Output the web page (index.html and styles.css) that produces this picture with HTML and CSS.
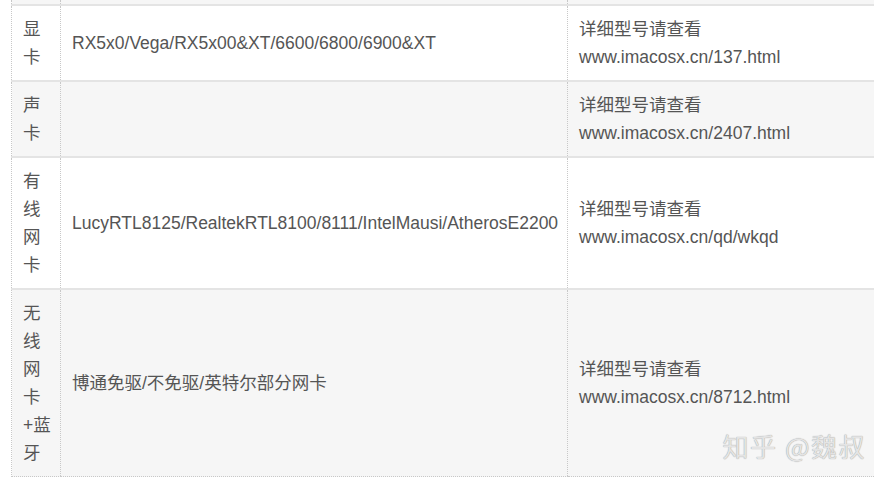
FILE: index.html
```html
<!DOCTYPE html>
<html lang="zh-CN">
<head>
    <meta charset="UTF-8">
    <meta name="viewport" content="width=device-width, initial-scale=1.0">
    <title>硬件支持</title>
    <link rel="stylesheet" href="styles.css">
</head>
<body>
    <div class="page">
        <table class="spec">
            <colgroup>
                <col class="col-name">
                <col class="col-model">
                <col class="col-link">
            </colgroup>
            <tr class="cut"><td></td><td></td><td></td></tr>
            <tr>
                <td class="name">显卡</td>
                <td class="model">RX5x0/Vega/RX5x00&amp;XT/6600/6800/6900&amp;XT</td>
                <td>详细型号请查看<br>www.imacosx.cn/137.html</td>
            </tr>
            <tr class="alt">
                <td class="name">声卡</td>
                <td class="model"></td>
                <td>详细型号请查看<br>www.imacosx.cn/2407.html</td>
            </tr>
            <tr>
                <td class="name">有线网卡</td>
                <td class="model">LucyRTL8125/RealtekRTL8100/8111/IntelMausi/AtherosE2200</td>
                <td>详细型号请查看<br>www.imacosx.cn/qd/wkqd</td>
            </tr>
            <tr class="alt last">
                <td class="name">无线网卡+蓝牙</td>
                <td class="model">博通免驱/不免驱/英特尔部分网卡</td>
                <td>详细型号请查看<br>www.imacosx.cn/8712.html</td>
            </tr>
        </table>
        <!-- 水印 -->
        <div class="watermark">知乎 @魏叔</div>
    </div>
</body>
</html>
```

FILE: styles.css
```css
body {
    margin: 0;
    background: #fff;
    font-family: "Liberation Sans", Arial, "Noto Sans CJK SC", sans-serif;
    color: #555;
}
.page {
    position: relative;
    width: 887px;
    height: 485px;
    overflow: hidden;
}
.spec {
    margin-left: 11px;
    width: 862px;
    table-layout: fixed;
    border-collapse: collapse;
    font-size: 17.5px;
    line-height: 28px;
}
.col-name {
    width: 49px;
}
.col-model {
    width: 507px;
}
.col-link {
    width: 306px;
}
.spec td {
    padding: 9px 11px;
    vertical-align: middle;
    border-left: 1px dotted #c8c8c8;
    border-bottom: 2px solid #e4e4e4;
}
.spec td.name {
    padding-left: 11px;
    padding-right: 8px;
    word-break: break-all;
}
.spec td.model {
    padding-right: 4px;
    white-space: nowrap;
}
.spec tr.cut td {
    height: 4px;
    padding: 0;
    background: #f6f6f6;
}
.spec tr.alt td {
    background: #f6f6f6;
}
.spec tr.last td {
    border-bottom: 1px dotted #c8c8c8;
}
.watermark {
    position: absolute;
    right: 21px;
    top: 429px;
    font-family: "Noto Sans CJK SC", sans-serif;
    font-size: 26px;
    line-height: 34px;
    color: #e4e4e4;
    text-shadow: 0 0 1px #8a8a8a;
    letter-spacing: 1.5px;
}
```
